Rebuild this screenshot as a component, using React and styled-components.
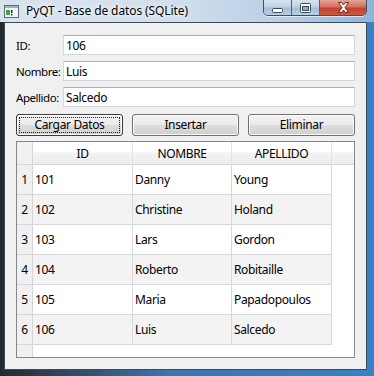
import React from "react";
import styled, { createGlobalStyle } from "styled-components";

const rows = [
  { id: "101", nombre: "Danny", apellido: "Young" },
  { id: "102", nombre: "Christine", apellido: "Holand" },
  { id: "103", nombre: "Lars", apellido: "Gordon" },
  { id: "104", nombre: "Roberto", apellido: "Robitaille" },
  { id: "105", nombre: "Maria", apellido: "Papadopoulos" },
  { id: "106", nombre: "Luis", apellido: "Salcedo" }
];

const fields = [
  { label: "ID:", value: "106" },
  { label: "Nombre:", value: "Luis" },
  { label: "Apellido:", value: "Salcedo" }
];

// Segoe UI is narrower than Noto Sans, so tighten the tracking a little
const uiFont = `
  font-family: "Noto Sans", "Open Sans", sans-serif;
  font-size: 12px;
  letter-spacing: -0.35px;
`;

const GlobalStyle = createGlobalStyle`
  html, body {
    margin: 0;
    padding: 0;
    background: #3b7fc2;
  }
  body {
    ${uiFont}
    color: #000;
  }
`;

const AppIcon = () => (
  <svg width="15" height="13" viewBox="0 0 15 13">
    <rect x="0.5" y="0.5" width="14" height="12" fill="#f4f6f8" stroke="#5d6b78" />
    <rect x="1" y="1" width="13" height="2" fill="#9fb2c4" />
    <rect x="2" y="5" width="4" height="5" fill="#3aa845" />
    <rect x="7" y="5" width="1.5" height="3" fill="#2a2a2a" />
    <rect x="7" y="9" width="1.5" height="1.5" fill="#2a2a2a" />
  </svg>
);

const MinGlyph = () => (
  <svg width="11" height="5" viewBox="0 0 11 5">
    <rect x="0.5" y="0.5" width="10" height="4" rx="1" fill="#fff" stroke="#3a4a5c" />
  </svg>
);

const MaxGlyph = () => (
  <svg width="11" height="10" viewBox="0 0 11 10">
    <rect x="0.5" y="0.5" width="10" height="9" rx="1" fill="#fff" stroke="#3a4a5c" />
    <rect x="2.5" y="3.5" width="6" height="4" fill="#9aa7b6" stroke="#3a4a5c" />
  </svg>
);

const CloseGlyph = () => (
  <svg width="13" height="11" viewBox="0 0 13 11">
    <path
      d="M1.5 0.5 L4.5 0.5 L6.5 3 L8.5 0.5 L11.5 0.5 L8 5.5 L11.5 10.5 L8.5 10.5 L6.5 8 L4.5 10.5 L1.5 10.5 L5 5.5 Z"
      fill="#fff"
      stroke="#5a1a12"
      strokeWidth="0.9"
      strokeLinejoin="round"
    />
  </svg>
);

export default function App() {
  return (
    <>
      <GlobalStyle />
      <Window>
        <TitleBar>
          <AppIcon />
          <Caption>PyQT - Base de datos (SQLite)</Caption>
          <CaptionButtons>
            <CaptionButton $kind="min">
              <MinGlyph />
            </CaptionButton>
            <CaptionButton $kind="max">
              <MaxGlyph />
            </CaptionButton>
            <CaptionButton $kind="close">
              <CloseGlyph />
            </CaptionButton>
          </CaptionButtons>
        </TitleBar>
        <Client>
          <Form>
            {fields.map(f => (
              <React.Fragment key={f.label}>
                <Label>{f.label}</Label>
                <LineEdit type="text" defaultValue={f.value} />
              </React.Fragment>
            ))}
          </Form>
          <ButtonRow>
            <PushButton $focused>
              <FocusRect>Cargar Datos</FocusRect>
            </PushButton>
            <PushButton>
              <FocusRect>Insertar</FocusRect>
            </PushButton>
            <PushButton>
              <FocusRect>Eliminar</FocusRect>
            </PushButton>
          </ButtonRow>
          <Table>
            <HeaderRow>
              <Corner />
              <HeaderCell>ID</HeaderCell>
              <HeaderCell>NOMBRE</HeaderCell>
              <HeaderCell>APELLIDO</HeaderCell>
              <HeaderCell $last />
            </HeaderRow>
            {rows.map((r, i) => (
              <Row key={r.id} $alt={i % 2 === 1}>
                <RowHeader>{i + 1}</RowHeader>
                <Cell>{r.id}</Cell>
                <Cell>{r.nombre}</Cell>
                <Cell>{r.apellido}</Cell>
                <Cell $empty />
              </Row>
            ))}
            <Filler>
              <RowHeader $blank />
              <div />
            </Filler>
          </Table>
        </Client>
      </Window>
    </>
  );
}

const Window = styled.div`
  width: 374px;
  height: 376px;
  display: flex;
  flex-direction: column;
  overflow: hidden;
  background: linear-gradient(90deg, #23282e 0%, #2f3e4f 12%, #3d74ad 45%, #3b80c6 100%);
`;

const TitleBar = styled.div`
  height: 22px;
  flex: none;
  display: flex;
  align-items: center;
  padding-left: 4px;
  background: linear-gradient(90deg, #d9e3ee 0%, #d3dfec 45%, #b9cfe6 75%, #8fb3da 100%);
`;

const Caption = styled.span`
  margin-left: 7px;
  font-size: 12px;
  line-height: 22px;
  letter-spacing: -0.1px;
  color: #000;
  text-shadow: 0 0 6px #fff, 0 0 3px #fff;
`;

const CaptionButtons = styled.div`
  margin-left: auto;
  margin-right: 7px;
  align-self: flex-start;
  display: flex;
  height: 15px;
  border: 1px solid #3e4f63;
  border-top: none;
  border-radius: 0 0 5px 5px;
  overflow: hidden;
  box-shadow: 0 1px 0 rgba(255, 255, 255, 0.6);
`;

const CaptionButton = styled.div`
  width: ${p => (p.$kind === "close" ? "46px" : "27px")};
  display: flex;
  align-items: center;
  justify-content: center;
  padding-top: ${p => (p.$kind === "min" ? "5px" : "0")};
  border-left: ${p => (p.$kind === "min" ? "none" : "1px solid #4d6074")};
  background: ${p =>
    p.$kind === "close"
      ? "linear-gradient(180deg, #e4a494 0%, #d2705f 45%, #c2412f 55%, #cc5a3f 100%)"
      : "linear-gradient(180deg, #d8e3ef 0%, #bdd0e4 45%, #a6bfd9 55%, #b7cde3 100%)"};
`;

const Client = styled.div`
  flex: 1;
  margin: 0 7px 6px 4px;
  border: 1px solid #3c4c5e;
  background: #f0f0f0;
  padding: 12px 11px 11px 11px;
  display: flex;
  flex-direction: column;
  min-height: 0;
`;

const Form = styled.div`
  display: grid;
  grid-template-columns: 47px 1fr;
  grid-auto-rows: 20px;
  row-gap: 6px;
  align-items: center;
`;

const Label = styled.label`
  font-size: 11.5px;
  letter-spacing: -0.45px;
  white-space: nowrap;
`;

const LineEdit = styled.input`
  box-sizing: border-box;
  height: 20px;
  margin: 0;
  padding: 0 2px;
  border: 1px solid #d4d8de;
  border-top-color: #abadb3;
  background: #fff;
  ${uiFont}
  color: #000;
  outline: none;
`;

const ButtonRow = styled.div`
  margin-top: 7px;
  display: grid;
  grid-template-columns: repeat(3, 1fr);
  column-gap: 9px;
`;

const PushButton = styled.button`
  box-sizing: border-box;
  height: 22px;
  margin: 0;
  padding: 2px;
  border: 1px solid ${p => (p.$focused ? "#3c3c3c" : "#707070")};
  border-radius: 3px;
  background: linear-gradient(180deg, #f2f2f2 0%, #ebebeb 48%, #dddddd 52%, #cfcfcf 100%);
  box-shadow: inset 0 0 0 1px #fbfbfb;
  ${uiFont}
  color: #000;
  display: flex;

  & > span {
    border-color: ${p => (p.$focused ? "#222" : "transparent")};
  }
`;

const FocusRect = styled.span`
  flex: 1;
  display: flex;
  align-items: center;
  justify-content: center;
  border: 1px dotted transparent;
  line-height: 14px;
`;

const Table = styled.div`
  margin-top: 5px;
  flex: 1;
  min-height: 0;
  border: 1px solid #828790;
  background: #fff;
  display: flex;
  flex-direction: column;
`;

const columns = "16px 100px 99px 100px 1fr";

const HeaderRow = styled.div`
  display: grid;
  grid-template-columns: ${columns};
  height: 23px;
  flex: none;
`;

const Corner = styled.div`
  background: #f0f0f0;
  border-right: 1px solid #d5d5d5;
  border-bottom: 1px solid #d5d5d5;
`;

const HeaderCell = styled.div`
  display: flex;
  align-items: center;
  justify-content: center;
  background: linear-gradient(180deg, #ffffff 0%, #ffffff 45%, #f3f3f3 50%, #ececec 100%);
  border-right: ${p => (p.$last ? "none" : "1px solid #e2e2e2")};
  border-bottom: 1px solid #d5d5d5;
`;

const Row = styled.div`
  display: grid;
  grid-template-columns: ${columns};
  height: 30px;
  flex: none;
  background: ${p => (p.$alt ? "#f3f3f3" : "#fff")};
`;

const RowHeader = styled.div`
  display: flex;
  align-items: center;
  justify-content: center;
  background: #f0f0f0;
  border-right: 1px solid #d5d5d5;
  border-bottom: ${p => (p.$blank ? "none" : "1px solid #d5d5d5")};
`;

const Cell = styled.div`
  display: flex;
  align-items: center;
  padding-left: 2px;
  border-right: ${p => (p.$empty ? "none" : "1px solid #d8d8d8")};
  border-bottom: ${p => (p.$empty ? "none" : "1px solid #d8d8d8")};
  background: ${p => (p.$empty ? "#fff" : "transparent")};
  white-space: nowrap;
  overflow: hidden;
`;

const Filler = styled.div`
  flex: 1;
  display: grid;
  grid-template-columns: 16px 1fr;
`;
